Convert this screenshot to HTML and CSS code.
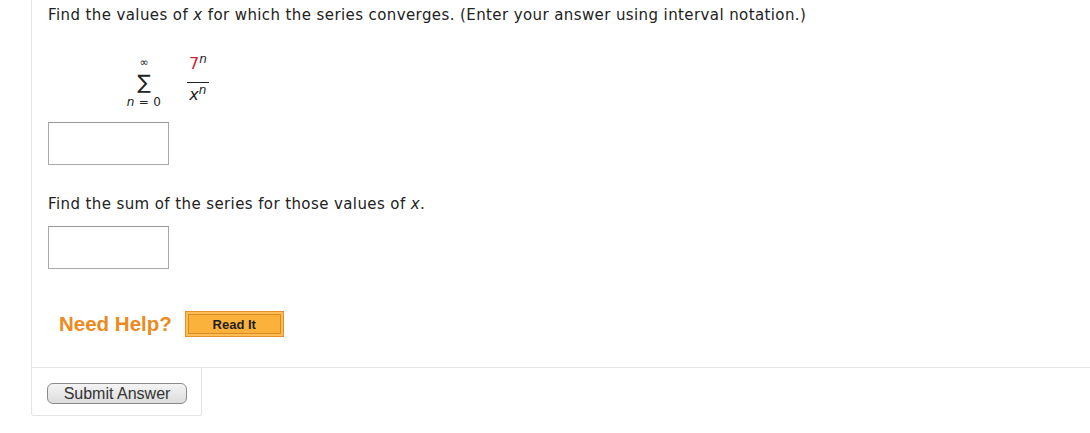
FILE: index.html
```html
<!DOCTYPE html>
<html lang="en">
  <head>
    <meta charset="UTF-8" />
    <meta name="viewport" content="width=device-width, initial-scale=1.0" />
    <title>Series Convergence</title>
    <link rel="stylesheet" href="styles.css">
  </head>
  <body>
    <div class="question">
      <div class="question-body">
        <p class="prompt">Find the values of <i>x</i> for which the series converges. (Enter your answer using interval notation.)</p>

        <div class="series">
          <div class="sigma">
            <span class="sigma-top">&infin;</span>
            <span class="sigma-sign">&sum;</span>
            <span class="sigma-bottom"><i>n</i> = 0</span>
          </div>
          <div class="fraction">
            <span class="numerator"><span class="red">7</span><sup><i>n</i></sup></span>
            <span class="denominator"><i>x</i><sup><i>n</i></sup></span>
          </div>
        </div>

        <input class="answer" type="text" />

        <p class="prompt second">Find the sum of the series for those values of <i>x</i>.</p>

        <input class="answer last" type="text" />

        <div class="help">
          <span class="help-label">Need Help?</span>
          <button class="read-it">Read It</button>
        </div>
      </div>

      <div class="submit-box">
        <button class="submit">Submit Answer</button>
      </div>
    </div>
  </body>
</html>
```

FILE: styles.css
```css
body {
  margin: 0;
  background-color: #fff;
  font-family: "DejaVu Sans", Verdana, sans-serif;
  color: #222;
}

.question {
  margin-left: 31px;
}

.question-body {
  border-left: 1px solid #e4e4e4;
  border-bottom: 1px solid #e4e4e4;
  padding: 6px 0 0 16px;
  height: 368px;
  box-sizing: border-box;
}

.prompt {
  margin: 0;
  font-size: 15px;
  letter-spacing: 0.4px;
  line-height: 18px;
}

.prompt.second {
  margin-top: 30px;
}

/* summation: sigma with limits, then the fraction */
.series {
  display: flex;
  align-items: flex-start;
  margin: 32px 0 0 78px;
}

.sigma {
  display: flex;
  flex-direction: column;
  align-items: center;
  width: 36px;
}

.sigma-top {
  font-size: 11px;
  line-height: 14px;
}

.sigma-sign {
  font-size: 20px;
  line-height: 24px;
}

.sigma-bottom {
  font-size: 12px;
  line-height: 16px;
  letter-spacing: 0.3px;
}

.fraction {
  display: flex;
  flex-direction: column;
  align-items: center;
  margin: -1px 0 0 25px;
  font-size: 16px;
}

.numerator {
  border-bottom: 1px solid #222;
  padding: 0 2px 9px;
  line-height: 18px;
}

.denominator {
  padding-top: 3px;
  line-height: 18px;
}

.fraction sup {
  font-size: 12px;
  vertical-align: 6px;
  line-height: 0;
}

.red {
  color: #d0202e;
}

.answer {
  display: block;
  width: 121px;
  height: 43px;
  box-sizing: border-box;
  margin-top: 12px;
  border: 1px solid #a8a8a8;
  border-top-color: #999;
  background: #fff;
}

.answer.last {
  margin-top: 13px;
}

.help {
  display: flex;
  align-items: center;
  margin: 42px 0 0 11px;
}

.help-label {
  font-family: "Liberation Sans", Arial, sans-serif;
  font-weight: bold;
  font-size: 20.5px;
  color: #ec8a1d;
}

.read-it {
  margin-left: 13px;
  width: 99px;
  height: 26px;
  padding: 0;
  border: 1px solid #e88e28;
  background: #fbb23d;
  box-shadow: inset 0 0 0 2px #fdbf55, inset 0 0 0 3px #d98a22;
  font-family: "Liberation Sans", Arial, sans-serif;
  font-weight: bold;
  font-size: 13px;
  color: #1e1e1e;
}

.submit-box {
  width: 171px;
  height: 48px;
  box-sizing: border-box;
  border: 1px solid #e4e4e4;
  border-top: none;
  border-radius: 0 0 3px 3px;
  padding: 15px 0 0 15px;
}

.submit {
  width: 140px;
  height: 21px;
  padding: 0;
  border: 1px solid #8a8a8a;
  border-radius: 6px;
  background: linear-gradient(#f4f4f4, #dcdcdc);
  font-family: "Liberation Sans", Arial, sans-serif;
  font-size: 16px;
  color: #333;
}
```
